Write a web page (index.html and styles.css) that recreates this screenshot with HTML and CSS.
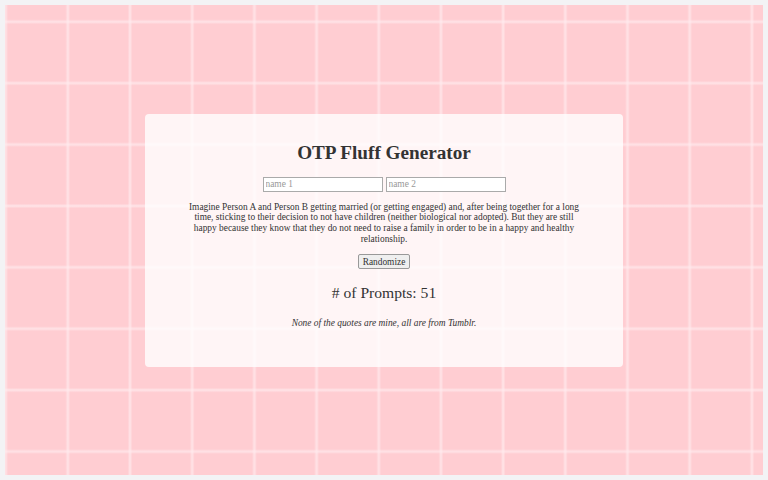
FILE: index.html
```html
<!DOCTYPE html>
<html lang="en">
<head>
  <meta charset="UTF-8" />
  <meta name="viewport" content="width=device-width, initial-scale=1.0" />
  <title>OTP Fluff Generator</title>
  <link rel="stylesheet" href="styles.css">
</head>
<body>
  <div class="backdrop">
    <div class="card">
      <h1>OTP Fluff Generator</h1>
      <div class="names">
        <input type="text" id="name1" placeholder="name 1" />
        <input type="text" id="name2" placeholder="name 2" />
      </div>
      <p class="prompt" id="prompt">Imagine Person A and Person B getting married (or getting engaged) and, after being together for a long time, sticking to their decision to not have children (neither biological nor adopted). But they are still happy because they know that they do not need to raise a family in order to be in a happy and healthy relationship.</p>
      <button class="rand-btn">Randomize</button>
      <h2 class="count"># of Prompts: 51</h2>
      <p class="note">None of the quotes are mine, all are from Tumblr.</p>
    </div>
  </div>
</body>
</html>
```

FILE: styles.css
```css
* { box-sizing: border-box; margin: 0; padding: 0; }
html { background-color: #f3f3f5; }
body { font-family: 'Liberation Serif', 'Times New Roman', serif; color: #333; }

/* pink checked paper */
.backdrop {
  margin: 5px; height: 470px;
  display: flex; align-items: center; justify-content: center;
  background-color: #ffcdd2;
  background-image:
    linear-gradient(90deg, transparent 0, rgba(255,234,237,0.45) 0.8px, rgba(255,236,239,0.75) 2px, rgba(255,234,237,0.45) 3.2px, transparent 4px),
    linear-gradient(180deg, transparent 0, rgba(255,234,237,0.45) 0.8px, rgba(255,236,239,0.75) 2px, rgba(255,234,237,0.45) 3.2px, transparent 4px);
  background-size: 62.2px 100%, 100% 61.4px;
  background-position: 60.8px 0, 0 14.8px;
}

.card {
  width: 478px; height: 253px;
  background: rgba(255,255,255,0.8);
  border-radius: 4px;
  padding: 28px 40px 0;
  text-align: center;
}
.card h1 {
  font-size: 19.2px; font-weight: bold;
  line-height: 22px; margin-bottom: 13px;
}
.names {
  display: flex; justify-content: center; gap: 3px;
  margin-bottom: 10px;
}
.names input {
  width: 120px; height: 15px;
  font-family: inherit; font-size: 9.4px;
  padding: 0 2px; color: #333;
  border: 1px solid #aaa; background: #fff;
}
.names input::placeholder { color: #999; }
.prompt {
  font-size: 9.4px; line-height: 10.7px;
  max-width: 396px; margin: 0 auto 10px;
}
.rand-btn {
  display: block; margin: 0 auto;
  font-family: inherit; font-size: 9.4px;
  height: 15px; padding: 0 4px; color: #333;
  background: #efefef; border: 1px solid #999;
  border-radius: 2px;
}
.count {
  font-size: 15.6px; font-weight: normal;
  line-height: 18px; margin: 15px 0 16px;
}
.note {
  font-size: 9.4px; font-style: italic;
  line-height: 11px;
}
```
